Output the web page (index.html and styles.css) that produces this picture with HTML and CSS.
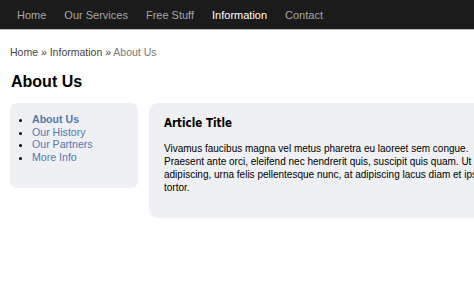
FILE: index.html
```html
<!DOCTYPE html>
<html lang="en">
<head>
  <meta charset="UTF-8"><title>About Us</title>
  <link rel="stylesheet" href="styles.css">
</head>
<body>

  <nav class="topnav">
    <a href="#">Home</a><a href="#">Our Services</a><a href="#">Free Stuff</a>
    <a href="#" class="active">Information</a><a href="#">Contact</a>
  </nav>

  <div class="crumbs"><a href="#">Home</a> &raquo; <a href="#">Information</a> &raquo; <span>About Us</span></div>

  <h1>About Us</h1>

  <div class="content">
    <aside class="sidebar">
      <ul>
        <li><a href="#" class="current">About Us</a></li>
        <li><a href="#">Our History</a></li>
        <li><a href="#">Our Partners</a></li>
        <li><a href="#">More Info</a></li>
      </ul>
    </aside>

    <article class="article">
      <h2>Article Title</h2>
      <p>Vivamus faucibus magna vel metus pharetra eu laoreet sem congue. Praesent ante orci, eleifend nec hendrerit quis, suscipit quis quam. Ut adipiscing, urna felis pellentesque nunc, at adipiscing lacus diam et ipsum tortor.</p>
    </article>
  </div>

</body>
</html>
```

FILE: styles.css
```css
* { margin:0; padding:0; box-sizing:border-box }
body { font-family:'Liberation Sans',Arial,sans-serif; background:#fff; color:#111; overflow:hidden; width:474px; }

/* Top nav */
.topnav { background:#1b1b1b; height:30px; border-bottom:1px solid #b8b8b8; display:flex; align-items:center; padding:1px 8px 0; }
.topnav a { color:#a6a6a6; text-decoration:none; font-size:11px; padding:0 9px; }
.topnav a.active { color:#fff; }

/* Breadcrumb + heading */
.crumbs { font-size:10.5px; color:#444; padding:15px 10px 0; line-height:14px; }
.crumbs a { color:#444; text-decoration:none; }
.crumbs span { color:#777; }
h1 { font-size:16px; font-weight:bold; color:#000; padding:13px 11px 0; line-height:20px; }

/* Columns */
.content { display:flex; align-items:flex-start; gap:11px; padding:11px 0 0 10px; }
.sidebar { background:#eef0f3; border-radius:7px; width:128px; height:85px; flex:none; padding:10px 0 0 22px; }
.sidebar ul { font-size:10.6px; line-height:12.5px; color:#000; }
.sidebar a { color:#5577b0; text-decoration:none; }
.sidebar a.current { font-weight:bold; }

.article { background:#eef0f3; border-radius:9px; width:360px; flex:none; height:115px; padding:13px 0 0 15px; font-family:'DejaVu Sans Condensed','DejaVu Sans',Tahoma,sans-serif; }
.article h2 { font-size:11.5px; font-weight:bold; color:#000; line-height:15px; margin-bottom:11px; }
.article p { font-family:'Liberation Sans',Arial,sans-serif; font-size:10px; line-height:13px; color:#000; width:330px; }
```
